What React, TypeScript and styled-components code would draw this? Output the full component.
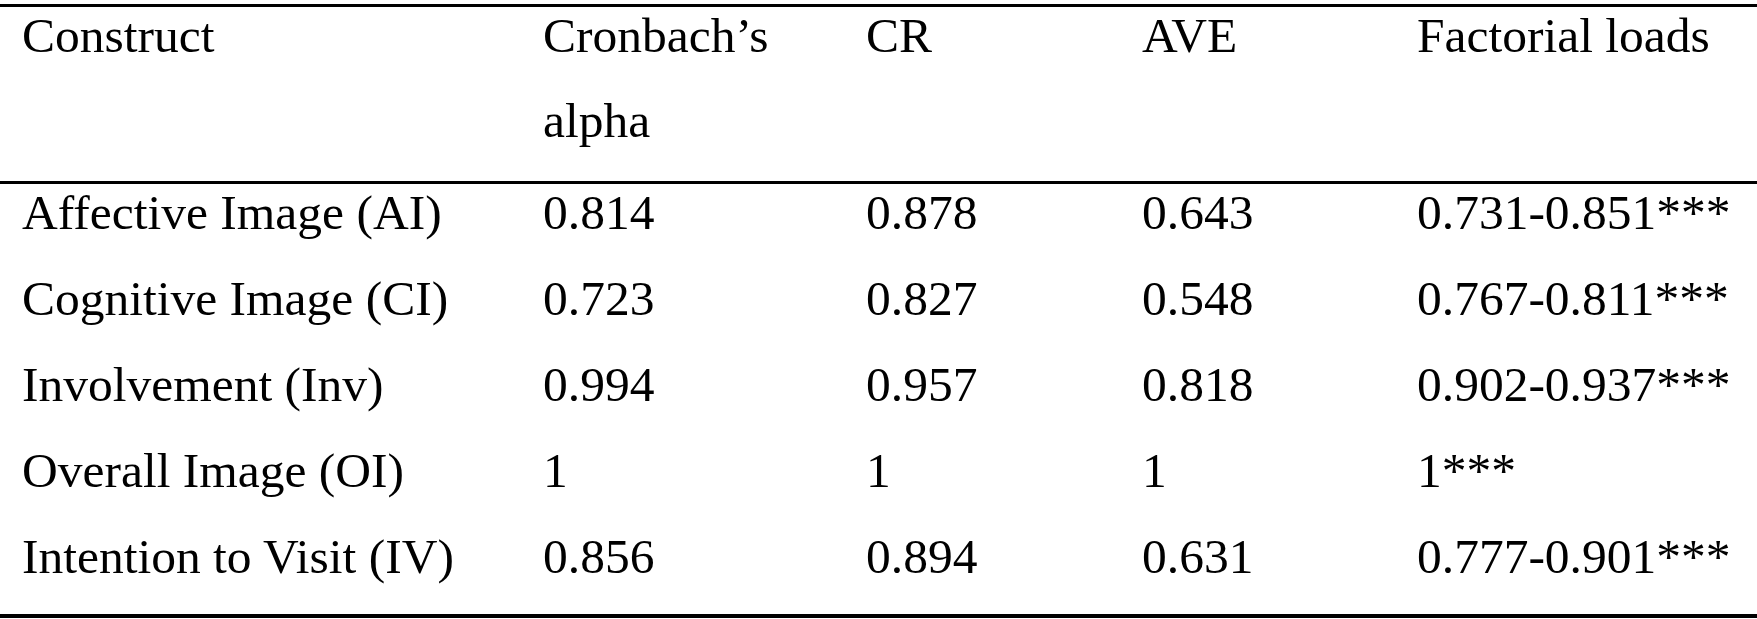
import styled, { createGlobalStyle } from "styled-components"

const GlobalStyle = createGlobalStyle`
  html, body {
    margin: 0;
    padding: 0;
    background: #ffffff;
  }
`

const columns = [523, 323, 276, 275, 360]

const rows = [
  ["Affective Image (AI)", "0.814", "0.878", "0.643", "0.731-0.851***"],
  ["Cognitive Image (CI)", "0.723", "0.827", "0.548", "0.767-0.811***"],
  ["Involvement (Inv)", "0.994", "0.957", "0.818", "0.902-0.937***"],
  ["Overall Image (OI)", "1", "1", "1", "1***"],
  ["Intention to Visit (IV)", "0.856", "0.894", "0.631", "0.777-0.901***"],
]

export default function App() {
  return (
    <>
      <GlobalStyle />
      <Page>
        <Table>
          <colgroup>
            {columns.map((w, i) => (
              <col key={i} style={{ width: w }} />
            ))}
          </colgroup>
          <thead>
            <tr>
              <HeadCell $first>
                <Text $lh={85}>Construct</Text>
              </HeadCell>
              <HeadCell>
                <Text $lh={85}>Cronbach’s alpha</Text>
              </HeadCell>
              <HeadCell>
                <Text $lh={85}>CR</Text>
              </HeadCell>
              <HeadCell>
                <Text $lh={85}>AVE</Text>
              </HeadCell>
              <HeadCell>
                <Text $lh={85}>Factorial loads</Text>
              </HeadCell>
            </tr>
          </thead>
          <tbody>
            {rows.map((row, r) => (
              <tr key={r}>
                {row.map((value, c) => (
                  <Cell key={c} $first={c === 0}>
                    <Text $lh={86}>{value}</Text>
                  </Cell>
                ))}
              </tr>
            ))}
          </tbody>
        </Table>
      </Page>
    </>
  )
}

const Page = styled.div`
  padding-top: 4px;
  width: 1757px;
  font-family: "Liberation Serif", "Times New Roman", serif;
  font-size: 49.5px;
  color: #000000;
`

const Table = styled.table`
  width: 1757px;
  table-layout: fixed;
  border-collapse: collapse;
  border-top: 3px solid #000000;
  border-bottom: 4px solid #000000;

  thead tr {
    border-bottom: 3px solid #000000;
  }
`

const HeadCell = styled.th<{ $first?: boolean }>`
  padding: 0 0 4px ${(p) => (p.$first ? "22px" : "20px")};
  text-align: left;
  vertical-align: top;
  font-weight: 400;
`

const Cell = styled.td<{ $first?: boolean }>`
  padding: 0 0 0 ${(p) => (p.$first ? "22px" : "20px")};
  vertical-align: top;
  white-space: nowrap;
`

const Text = styled.div<{ $lh: number }>`
  line-height: ${(p) => p.$lh}px;
  margin-top: -14px;
  margin-bottom: 14px;
`
